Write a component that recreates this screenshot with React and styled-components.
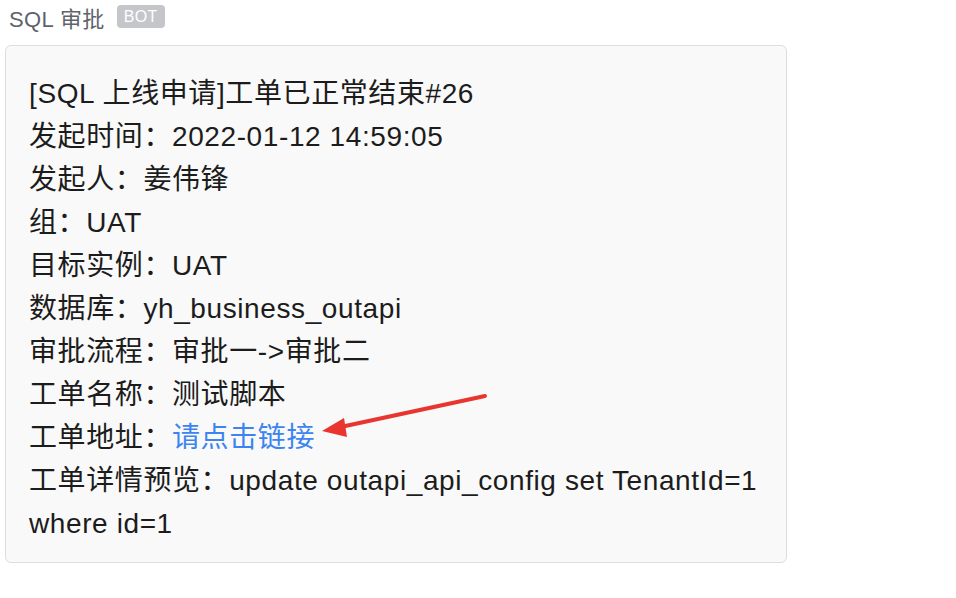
import React from "react";
import styled, { createGlobalStyle } from "styled-components";

const Global = createGlobalStyle`
  html, body { margin: 0; padding: 0; background: #ffffff; }
  body { font-family: "Liberation Sans", "Noto Sans CJK SC", sans-serif; }
`;

const Page = styled.div`
  width: 956px;
  height: 598px;
  padding: 3px 0 0 5px;
  box-sizing: border-box;
  position: relative;
  overflow: hidden;
`;

const Header = styled.div`
  display: flex;
  align-items: center;
  gap: 12px;
  height: 27px;
  padding-left: 4px;
  margin-bottom: 15px;
`;

const Title = styled.span`
  font-size: 22px;
  color: #5f636b;
  letter-spacing: 0.4px;
`;

const Badge = styled.span`
  display: inline-flex;
  align-items: center;
  justify-content: center;
  width: 48px;
  height: 23px;
  border-radius: 4px;
  background: #c4c6ca;
  color: #ffffff;
  font-size: 16px;
  letter-spacing: 0.3px;
`;

const Card = styled.div`
  width: 782px;
  height: 518px;
  box-sizing: border-box;
  border: 1px solid #dedede;
  border-radius: 6px;
  background: #f9f9f9;
  padding: 26px 10px 0 23px;
`;

const Line = styled.div`
  font-size: 28px;
  letter-spacing: 0.6px;
  line-height: 43px;
  color: #1c1c1c;
`;

const Link = styled.span`
  color: #3c84ef;
`;

const Arrow = styled.svg`
  position: absolute;
  left: 300px;
  top: 380px;
  pointer-events: none;
`;

const lines = [
  "[SQL 上线申请]工单已正常结束#26",
  "发起时间：2022-01-12 14:59:05",
  "发起人：姜伟锋",
  "组：UAT",
  "目标实例：UAT",
  "数据库：yh_business_outapi",
  "审批流程：审批一->审批二",
  "工单名称：测试脚本",
];

export default function App() {
  return (
    <>
      <Global />
      <Page>
        <Header>
          <Title>SQL 审批</Title>
          <Badge>BOT</Badge>
        </Header>
        <Card>
          {lines.map((l) => (
            <Line key={l}>{l}</Line>
          ))}
          <Line>
            工单地址：<Link>请点击链接</Link>
          </Line>
          <Line>工单详情预览：update outapi_api_config set TenantId=1 where id=1</Line>
        </Card>
        <Arrow width="200" height="70" viewBox="0 0 200 70">
          <line x1="185" y1="16" x2="36" y2="48" stroke="#e8352f" strokeWidth="4" strokeLinecap="round" />
          <polygon points="22,51 44,38 47,57" fill="#e8352f" />
        </Arrow>
      </Page>
    </>
  );
}
